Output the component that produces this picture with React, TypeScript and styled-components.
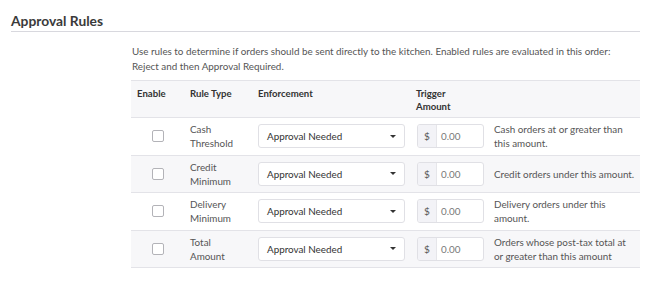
import React from "react";
import styled, { createGlobalStyle } from "styled-components";

const Global = createGlobalStyle`
  html, body { margin: 0; padding: 0; background: #fff; }
  body { font-family: Lato, "Open Sans", sans-serif; color: #555; }
  * { box-sizing: border-box; }
`;

const Page = styled.div`
  padding: 12px 9px 0 11px;
`;

const Title = styled.h2`
  margin: 0;
  font-size: 13.8px;
  font-weight: 700;
  color: #3a3a3a;
  padding-bottom: 2px;
  border-bottom: 1px solid #d8d8de;
`;

const Content = styled.div`
  padding: 12px 0 0 120px;
`;

const Intro = styled.p`
  margin: 0 0 6px 1px;
  font-size: 9.85px;
  line-height: 15px;
  color: #555;
`;

const Table = styled.div`
  display: grid;
  grid-template-columns: 53px 68px 158px 77px 1fr;
`;

const Row = styled.div<{ $shade?: boolean }>`
  display: contents;
  & > div {
    background: ${(p) => (p.$shade ? "#f7f7f9" : "#fff")};
    border-bottom: 1px solid #e3e3e8;
  }
`;

const Head = styled.div`
  font-size: 9.6px;
  font-weight: 700;
  color: #333;
  line-height: 13px;
  padding: 6px 0 4px 6px;
  border-top: 1px solid #e3e3e8;
`;

const Cell = styled.div`
  display: flex;
  align-items: center;
  min-height: 37.5px;
  font-size: 9.85px;
  line-height: 14px;
  color: #555;
`;

const CheckCell = styled(Cell)`
  justify-content: center;
`;

const Check = styled.span`
  width: 12px;
  height: 12px;
  border: 1px solid #b3b3b8;
  border-radius: 2px;
  background: #fff;
`;

const TypeCell = styled(Cell)`
  padding-left: 6px;
`;

const Select = styled.div`
  width: 147px;
  height: 24px;
  margin-left: 6px;
  border: 1px solid #e0e0e5;
  border-radius: 3px;
  background: #fff;
  display: flex;
  align-items: center;
  justify-content: space-between;
  padding: 0 8px 0 8px;
  color: #333;
  font-size: 9.85px;
`;

const Caret = styled.span`
  width: 0;
  height: 0;
  border-left: 3px solid transparent;
  border-right: 3px solid transparent;
  border-top: 3px solid #333;
`;

const InputGroup = styled.div`
  width: 67px;
  height: 24px;
  margin-left: 7px;
  border: 1px solid #e0e0e5;
  border-radius: 3px;
  background: #fff;
  display: flex;
  overflow: hidden;
`;

const Addon = styled.span`
  width: 19px;
  background: #f3f3f7;
  border-right: 1px solid #e6e6ea;
  display: flex;
  align-items: center;
  justify-content: center;
  color: #555;
  font-size: 10px;
`;

const Amount = styled.span`
  display: flex;
  align-items: center;
  padding-left: 4px;
  color: #777;
  font-size: 9.85px;
`;

const DescCell = styled(Cell)`
  padding: 0 4px 0 7px;
  color: #555;
`;

const rules = [
  { type: ["Cash", "Threshold"], desc: "Cash orders at or greater than this amount." },
  { type: ["Credit", "Minimum"], desc: "Credit orders under this amount." },
  { type: ["Delivery", "Minimum"], desc: "Delivery orders under this amount." },
  { type: ["Total", "Amount"], desc: "Orders whose post-tax total at or greater than this amount" },
];

export default function App() {
  return (
    <>
      <Global />
      <Page>
        <Title>Approval Rules</Title>
        <Content>
          <Intro>
            Use rules to determine if orders should be sent directly to the kitchen. Enabled rules are evaluated in this order:
            <br />
            Reject and then Approval Required.
          </Intro>
          <Table>
            <Row $shade>
              <Head>Enable</Head>
              <Head>Rule Type</Head>
              <Head>Enforcement</Head>
              <Head>
                Trigger
                <br />
                Amount
              </Head>
              <Head />
            </Row>
            {rules.map((r, i) => (
              <Row key={i} $shade={i % 2 === 1}>
                <CheckCell>
                  <Check />
                </CheckCell>
                <TypeCell>
                  <div>
                    {r.type[0]}
                    <br />
                    {r.type[1]}
                  </div>
                </TypeCell>
                <Cell>
                  <Select>
                    <span>Approval Needed</span>
                    <Caret />
                  </Select>
                </Cell>
                <Cell>
                  <InputGroup>
                    <Addon>$</Addon>
                    <Amount>0.00</Amount>
                  </InputGroup>
                </Cell>
                <DescCell>{r.desc}</DescCell>
              </Row>
            ))}
          </Table>
        </Content>
      </Page>
    </>
  );
}
